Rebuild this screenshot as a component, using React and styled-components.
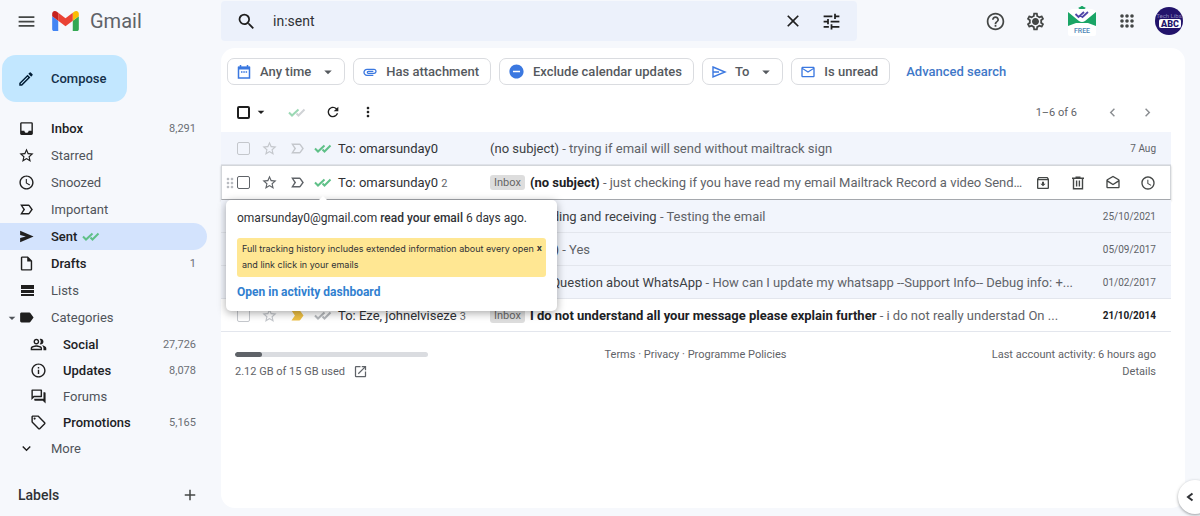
import React from 'react';
import styled, { createGlobalStyle, css } from 'styled-components';
import {
  MdAdd,
  MdArrowDropDown,
  MdAttachment,
  MdChevronLeft,
  MdChevronRight,
  MdClose,
  MdDragIndicator,
  MdExpandMore,
  MdHelpOutline,
  MdInbox,
  MdInfoOutline,
  MdLabel,
  MdLabelImportant,
  MdLabelImportantOutline,
  MdLaunch,
  MdMailOutline,
  MdMenu,
  MdMoreVert,
  MdOutlineArchive,
  MdOutlineDrafts,
  MdOutlineForum,
  MdOutlineInsertDriveFile,
  MdOutlineLocalOffer,
  MdOutlineModeEdit,
  MdOutlinePeopleAlt,
  MdOutlineSettings,
  MdRefresh,
  MdRemoveCircle,
  MdSchedule,
  MdSearch,
  MdStarBorder,
  MdTune,
} from 'react-icons/md';

const GlobalStyle = createGlobalStyle`
  * {
    box-sizing: border-box;
  }
  body {
    margin: 0;
    background: #f6f8fc;
    color: #303236;
    font-family: Roboto, 'Open Sans', sans-serif;
    font-size: 13px;
    overflow-x: hidden;
  }
  button, input {
    font: inherit;
    color: inherit;
  }
  ul {
    list-style: none;
    margin: 0;
    padding: 0;
  }
  a {
    color: inherit;
    text-decoration: none;
  }
  svg {
    display: block;
    flex: none;
  }
`;

const Page = styled.div`
  display: flex;
  flex-direction: column;
  min-height: 100vh;
`;

const Header = styled.header`
  display: flex;
  align-items: center;
  padding: 1px 17px 7px 0;
`;

const Brand = styled.div`
  width: 221px;
  flex: none;
  display: flex;
  align-items: center;
  padding-left: 16px;
`;

const BrandLink = styled.a`
  display: flex;
  align-items: center;
  gap: 11px;
  margin-left: 15px;
  color: #5f6368;
  font-size: 20px;
`;

const IconButton = styled.button`
  display: flex;
  align-items: center;
  justify-content: center;
  padding: 0;
  border: 0;
  background: none;
  color: ${(props) => props.$color || '#444746'};
  cursor: pointer;
`;

const SearchForm = styled.form`
  flex: 0 1 636px;
  display: flex;
  align-items: center;
  height: 40px;
  padding: 0 15px;
  border-radius: 4px;
  background: #ecf1fb;

  input {
    flex: 1;
    min-width: 0;
    margin: 0 16px;
    padding: 0;
    border: 0;
    outline: 0;
    background: none;
    font-size: 14px;
  }
  button + button {
    margin-left: 18px;
  }
`;

const HeaderTools = styled.div`
  display: flex;
  align-items: center;
  margin-left: auto;
  gap: 19px;
`;

const Body = styled.div`
  flex: 1;
  display: flex;
`;

const Sidebar = styled.aside`
  width: 221px;
  flex: none;
  padding-top: 7px;
`;

const ComposeButton = styled.button`
  display: flex;
  align-items: center;
  gap: 16px;
  height: 47px;
  margin: 0 0 13px 2px;
  padding: 0 20px 0 15px;
  border: 0;
  border-radius: 14px;
  background: #c2e7ff;
  color: #14304a;
  font-size: 13px;
  font-weight: 500;

  svg {
    color: #001d35;
  }
`;

const NavItem = styled.a`
  display: flex;
  align-items: center;
  position: relative;
  height: ${(props) => (props.$nested ? 26 : 27)}px;
  margin-right: 14px;
  padding: 0 11px 0 ${(props) => (props.$nested ? '30px' : '18px')};
  border-radius: 0 14px 14px 0;
  font-weight: ${(props) => (props.$bold ? 500 : 400)};
  color: ${(props) => (props.$bold ? '#202124' : '#50545a')};
  background: ${(props) => (props.$active ? '#d3e3fd' : 'none')};

  > svg:first-child {
    margin-right: 16px;
    color: #1f1f1f;
  }
`;

const NavCount = styled.span`
  margin-left: auto;
  font-size: 11px;
  font-weight: 400;
  color: #6b6f75;
`;

const NavTicks = styled.span`
  margin-left: 5px;
`;

const Expander = styled.span`
  position: absolute;
  left: 4px;
`;

const LabelsHead = styled.div`
  display: flex;
  align-items: center;
  justify-content: space-between;
  padding: 24px 22px 0 18px;

  h2 {
    margin: 0;
    font-size: 14px;
    font-weight: 500;
  }
`;

const Panel = styled.main`
  flex: 1;
  min-width: 0;
  margin: 0 15px 8px 0;
  padding: 10px 14px 0 0;
  border-radius: 14px;
  background: #fff;
`;

const Filters = styled.div`
  display: flex;
  align-items: center;
  gap: 8px;
  padding-left: 6px;
`;

const Chip = styled.button`
  display: flex;
  align-items: center;
  height: 27px;
  gap: 8px;
  padding: 0 ${(props) => (props.$menu ? 7 : 11)}px 0 8px;
  border: 1px solid #dadce0;
  border-radius: 7px;
  background: #fff;
  color: #55595e;
  font-size: 13px;
  font-weight: 500;
  white-space: nowrap;

  > svg:first-child {
    color: #3b78e0;
  }
`;

const AdvancedLink = styled.a`
  margin-left: 8px;
  color: #3f78c8;
  font-weight: 500;
`;

const Toolbar = styled.div`
  display: flex;
  align-items: center;
  height: 47px;
  padding: 7px 15px 0 16px;
`;

const Checkbox = styled.input`
  appearance: none;
  width: 13px;
  height: 13px;
  margin: 0;
  flex: none;
  border: ${(props) => (props.$strong ? 2 : 1)}px solid ${(props) => props.$color};
  border-radius: 2px;
`;

const ToolGroup = styled.div`
  display: flex;
  align-items: center;
  gap: 19px;
  margin-left: 3px;
`;

const Pager = styled.div`
  display: flex;
  align-items: center;
  gap: 18px;
  margin-left: auto;
  font-size: 11px;
  color: #5f6368;

  span {
    margin-right: 9px;
  }
`;

const hovered = css`
  height: 35px;
  background: #fff;
  border: 1px solid #d3d6da;
  border-bottom-color: #a5a8ad;
  padding: 0 14px 0 15px;
  box-shadow: 0 1px 2px rgba(60, 64, 67, 0.3);
`;

const MailRow = styled.li`
  position: relative;
  display: flex;
  align-items: center;
  height: 33px;
  padding: 0 15px 0 16px;
  border-bottom: 1px solid #e3e6ed;
  background: ${(props) => (props.$unread ? '#fff' : '#f2f5fc')};
  ${(props) => props.$hovered && hovered}
`;

const Marks = styled.div`
  display: flex;
  align-items: center;
  width: 101px;
  flex: none;
  gap: 11px;
  color: ${(props) => (props.$hovered ? '#5f6368' : '#c4c7cc')};

  svg:last-child {
    margin-left: -3px;
  }
`;

const DragHandle = styled.span`
  position: absolute;
  left: 0;
  color: #b8bbc0;
`;

const Sender = styled.span`
  width: 152px;
  flex: none;
  white-space: nowrap;

  small {
    font-size: 11px;
    color: #5f6368;
  }
`;

const Summary = styled.div`
  flex: 1;
  min-width: 0;
  display: flex;
  align-items: center;
  gap: 5px;
`;

const Tag = styled.span`
  flex: none;
  padding: 0 4px;
  border-radius: 3px;
  background: #ddd;
  color: #666;
  font-size: 11px;
  line-height: 15px;
`;

const Subject = styled.p`
  margin: 0;
  overflow: hidden;
  white-space: nowrap;
  text-overflow: ellipsis;
  color: #5f6368;

  strong {
    font-weight: ${(props) => (props.$bold ? 700 : 400)};
    color: ${(props) => (props.$bold ? '#202124' : '#3c4043')};
  }
`;

const DateCell = styled.time`
  width: 80px;
  flex: none;
  text-align: right;
  font-size: 10px;
  font-weight: ${(props) => (props.$bold ? 700 : 400)};
  color: ${(props) => (props.$bold ? '#202124' : '#5f6368')};
`;

const RowActions = styled.div`
  display: flex;
  flex: none;
  gap: 19px;
  margin-left: 12px;
`;

const Tooltip = styled.div`
  position: absolute;
  z-index: 2;
  top: 34px;
  left: 4px;
  width: 331px;
  padding: 10px 11px 11px;
  border-radius: 5px;
  background: #fff;
  box-shadow: 0 2px 8px rgba(0, 0, 0, 0.35);
  font-size: 12px;
  line-height: 16px;

  &::before {
    content: '';
    position: absolute;
    top: -4px;
    left: 92px;
    border: 5px solid transparent;
    border-top: 0;
    border-bottom-color: #fff;
  }
  p {
    margin: 0;
  }
  b {
    font-weight: 500;
  }
  > a {
    font-weight: 700;
    color: #3180d0;
  }
`;

const Notice = styled.div`
  display: flex;
  justify-content: space-between;
  align-items: flex-start;
  margin: 12px 0 7px;
  padding: 3px 4px 4px 5px;
  border-radius: 3px;
  background: #ffe793;
  font-family: Inter, sans-serif;
  font-size: 9px;

  button {
    padding: 0;
    border: 0;
    background: none;
    font-size: 9px;
    font-weight: 700;
    line-height: 14px;
  }
`;

const Footer = styled.footer`
  display: grid;
  grid-template-columns: 1fr 1fr 1fr;
  padding: 14px 15px 0 14px;
  font-size: 11px;
  line-height: 17px;
  color: #5f6368;
`;

const Storage = styled.div`
  a {
    display: flex;
    align-items: center;
    gap: 8px;
  }
`;

const Meter = styled.div`
  width: 193px;
  height: 5px;
  margin: 6px 0;
  border-radius: 3px;
  background: #dadce0;
  overflow: hidden;

  div {
    height: 100%;
    border-radius: 3px;
    background: #5f6368;
  }
`;

const FooterText = styled.div`
  text-align: ${(props) => props.$align};
`;

const SidePanelToggle = styled.button`
  position: fixed;
  right: -12px;
  bottom: 2px;
  width: 34px;
  height: 34px;
  padding: 0 0 0 8px;
  border: 0;
  border-radius: 50%;
  background: #fff;
  box-shadow: 0 1px 3px rgba(60, 64, 67, 0.5);
`;

const GmailLogo = () => (
  <svg width="27" height="20" viewBox="52 42 88 66">
    <path fill="#4285f4" d="M58 108h14V74L52 59v43c0 3.32 2.69 6 6 6" />
    <path fill="#34a853" d="M120 108h14c3.32 0 6-2.69 6-6V59l-20 15" />
    <path fill="#fbbc04" d="M120 48v26l20-15v-8c0-7.42-8.47-11.65-14.4-7.2" />
    <path fill="#ea4335" d="M72 74V48l24 18 24-18v26L96 92" />
    <path fill="#c5221f" d="M52 51v8l20 15V48l-5.6-4.2c-5.94-4.45-14.4-.22-14.4 7.2" />
  </svg>
);

const Ticks = ({ first = '#5fc088', second = first }) => (
  <svg width="18" height="9" viewBox="0 0 18 9" fill="none" strokeWidth="2">
    <path stroke={second} d="M8.5 5.5l2 2L16.5 1.5" />
    <path stroke={first} d="M1 4.5l3 3L10.5 1.5" />
  </svg>
);

const SentIcon = () => (
  <svg width="17" height="17" viewBox="0 0 24 24" fill="currentColor">
    <path d="M3 20v-6l8-2-8-2V4l19 8z" />
  </svg>
);

const ListsIcon = () => (
  <svg width="17" height="17" viewBox="0 0 17 17" fill="currentColor">
    <path d="M3 3h13v4H3zM3 8h13v3H3zM3 12h13v2H3z" />
  </svg>
);

const CalendarIcon = () => (
  <svg width="16" height="16" viewBox="0 0 16 16" fill="none" stroke="currentColor">
    <path strokeWidth="1.5" d="M2.5 3.5h11v10.5h-11z" />
    <path strokeWidth="3" d="M2 4h12" />
    <path strokeWidth="1.5" d="M4.5 1v3M11.5 1v3" />
    <path strokeWidth="1.5" d="M5 8h1.5M7.3 8h1.5M9.6 8h1.5" />
  </svg>
);

const SendOutlineIcon = () => (
  <svg width="16" height="16" viewBox="0 0 16 16" fill="none" stroke="currentColor" strokeWidth="1.4">
    <path d="M2 3l12 5-12 5V3zM2 8h6" />
  </svg>
);

const TrashIcon = () => (
  <svg width="16" height="16" viewBox="0 0 16 16" fill="none" stroke="currentColor" strokeWidth="1.4">
    <path d="M3.5 3.5v10.3h9V3.5M2 3.2h12M5.5 2.2h5M6.6 5.5v6M9.4 5.5v6" />
  </svg>
);

const SettingsIcon = () => (
  <svg width="21" height="21" viewBox="0 0 24 24">
    <MdOutlineSettings size={24} />
    <circle cx="12" cy="12" r="3" fill="currentColor" />
  </svg>
);

const AppsIcon = () => (
  <svg width="18" height="18" viewBox="0 0 18 18" fill="currentColor">
    {[4, 9, 14].map((y) => [4, 9, 14].map((x) => <circle key={`${x}-${y}`} cx={x} cy={y} r="1.8" />))}
  </svg>
);

const CollapseIcon = () => (
  <svg width="8" height="10" viewBox="0 0 8 10" fill="none" stroke="currentColor" strokeWidth="2">
    <path d="M6.5 1.5L2 5l4.5 3.5" />
  </svg>
);

const MailtrackLogo = () => (
  <svg width="34" height="30" viewBox="-2 0 34 30">
    <path fill="#1aa566" d="M10 4l5-4 5 4z" />
    <path fill="#fff" d="M1 5l4-2h20l4 2v23a2 2 0 0 1-2 2H3a2 2 0 0 1-2-2z" />
    <path fill="#1aa566" d="M11 2l4-2 4 2zM1 6l11 9q3 2 6 0l11-9v14l-8-3H9l-8 3z" />
    <path fill="none" stroke="#5046a8" strokeWidth="1.8" d="M8.5 8l3 3L17 6M13.5 9.5l2 1.5L21 6" />
    <text x="15" y="27" textAnchor="middle" fontSize="7" fontWeight="500" fill="#4c86b8">
      FREE
    </text>
  </svg>
);

const Avatar = () => (
  <svg width="28" height="28" viewBox="0 0 28 28">
    <circle cx="14" cy="14" r="14" fill="#22136b" />
    <text x="14" y="11" textAnchor="middle" fontSize="6" fill="#8d86bd">
      Tech Libs
    </text>
    <rect x="4" y="12" width="22" height="9" rx="2" fill="#fff" />
    <text x="15" y="20" textAnchor="middle" fontSize="9" fontWeight="900" fill="#22136b">
      ABC
    </text>
  </svg>
);

const navItems = [
  { label: 'Inbox', icon: <MdInbox size={17} />, count: '8,291', bold: true },
  { label: 'Starred', icon: <MdStarBorder size={17} /> },
  { label: 'Snoozed', icon: <MdSchedule size={17} /> },
  { label: 'Important', icon: <MdLabelImportantOutline size={17} /> },
  { label: 'Sent', icon: <SentIcon />, bold: true, active: true },
  { label: 'Drafts', icon: <MdOutlineInsertDriveFile size={17} />, count: '1', bold: true },
  { label: 'Lists', icon: <ListsIcon /> },
  { label: 'Categories', icon: <MdLabel size={17} />, expander: true },
  { label: 'Social', icon: <MdOutlinePeopleAlt size={17} />, count: '27,726', bold: true, nested: true },
  { label: 'Updates', icon: <MdInfoOutline size={17} />, count: '8,078', bold: true, nested: true },
  { label: 'Forums', icon: <MdOutlineForum size={17} />, nested: true },
  { label: 'Promotions', icon: <MdOutlineLocalOffer size={17} />, count: '5,165', bold: true, nested: true },
  { label: 'More', icon: <MdExpandMore size={17} /> },
];

const mails = [
  { to: 'omarsunday0', subject: '(no subject)', text: 'trying if email will send without mailtrack sign', date: '7 Aug' },
  {
    to: 'omarsunday0',
    count: 2,
    tag: true,
    subject: '(no subject)',
    text: 'just checking if you have read my email Mailtrack Record a video Send...',
    unread: true,
    hovered: true,
  },
  { to: 'omarsunday0', tag: true, subject: 'Sending and receiving', text: 'Testing the email', date: '25/10/2021' },
  { to: 'omarsunday0', subject: '(no subject)', text: 'Yes', date: '05/09/2017' },
  {
    to: 'support',
    tag: true,
    subject: 'Re: Question about WhatsApp',
    text: 'How can I update my whatsapp --Support Info-- Debug info: +...',
    date: '01/02/2017',
  },
  {
    to: 'Eze, johnelviseze',
    count: 3,
    tag: true,
    subject: 'I do not understand all your message please explain further',
    text: 'i do not really understad On ...',
    date: '21/10/2014',
    unread: true,
    important: true,
  },
];

const ReadTooltip = () => (
  <Tooltip role="tooltip">
    <p>
      omarsunday0@gmail.com <b>read your email</b> 6 days ago.
    </p>
    <Notice>
      <p>
        Full tracking history includes extended information about every open
        <br />
        and link click in your emails
      </p>
      <button aria-label="Dismiss">x</button>
    </Notice>
    <a href="#dashboard">Open in activity dashboard</a>
  </Tooltip>
);

const Mail = ({ mail }) => (
  <MailRow $unread={mail.unread} $hovered={mail.hovered}>
    {mail.hovered && (
      <DragHandle>
        <MdDragIndicator size={16} />
      </DragHandle>
    )}
    <Marks $hovered={mail.hovered}>
      <Checkbox type="checkbox" aria-label="Select" $color={mail.hovered ? '#5f6368' : '#c4c7cc'} />
      <MdStarBorder size={17} />
      {mail.important ? (
        <MdLabelImportant size={17} color="#eec044" />
      ) : (
        <MdLabelImportantOutline size={17} />
      )}
      <Ticks first={mail.important ? '#b5b8bc' : undefined} />
    </Marks>
    <Sender>
      To: {mail.to} {mail.count && <small>{mail.count}</small>}
    </Sender>
    <Summary>
      {mail.tag && <Tag>Inbox</Tag>}
      <Subject $bold={mail.unread}>
        <strong>{mail.subject}</strong> - {mail.text}
      </Subject>
    </Summary>
    {mail.hovered ? (
      <RowActions>
        <IconButton aria-label="Archive"><MdOutlineArchive size={16} /></IconButton>
        <IconButton aria-label="Delete"><TrashIcon /></IconButton>
        <IconButton aria-label="Mark as unread"><MdOutlineDrafts size={16} /></IconButton>
        <IconButton aria-label="Snooze"><MdSchedule size={16} /></IconButton>
      </RowActions>
    ) : (
      <DateCell $bold={mail.unread}>{mail.date}</DateCell>
    )}
    {mail.hovered && <ReadTooltip />}
  </MailRow>
);

const App = () => {
  return (
    <Page>
      <GlobalStyle />
      <Header>
        <Brand>
          <IconButton aria-label="Main menu"><MdMenu size={21} /></IconButton>
          <BrandLink href="#inbox">
            <GmailLogo />
            Gmail
          </BrandLink>
        </Brand>
        <SearchForm role="search">
          <IconButton type="button" aria-label="Search" $color="#1f1f1f"><MdSearch size={21} /></IconButton>
          <input aria-label="Search mail" defaultValue="in:sent" />
          <IconButton type="button" aria-label="Clear search" $color="#1f1f1f"><MdClose size={20} /></IconButton>
          <IconButton type="button" aria-label="Search options" $color="#1f1f1f"><MdTune size={21} /></IconButton>
        </SearchForm>
        <HeaderTools>
          <IconButton aria-label="Support"><MdHelpOutline size={21} /></IconButton>
          <IconButton aria-label="Settings"><SettingsIcon /></IconButton>
          <IconButton aria-label="Mailtrack"><MailtrackLogo /></IconButton>
          <IconButton aria-label="Google apps"><AppsIcon /></IconButton>
          <IconButton aria-label="Account"><Avatar /></IconButton>
        </HeaderTools>
      </Header>
      <Body>
        <Sidebar>
          <ComposeButton>
            <MdOutlineModeEdit size={18} />
            Compose
          </ComposeButton>
          <nav>
            {navItems.map((item) => (
              <NavItem
                key={item.label}
                href={`#${item.label.toLowerCase()}`}
                $bold={item.bold}
                $active={item.active}
                $nested={item.nested}
              >
                {item.icon}
                {item.expander && (
                  <Expander><MdArrowDropDown size={16} /></Expander>
                )}
                {item.label}
                {item.active && <NavTicks><Ticks /></NavTicks>}
                {item.count && <NavCount>{item.count}</NavCount>}
              </NavItem>
            ))}
          </nav>
          <LabelsHead>
            <h2>Labels</h2>
            <IconButton aria-label="Create new label"><MdAdd size={18} /></IconButton>
          </LabelsHead>
        </Sidebar>
        <Panel>
          <Filters>
            <Chip $menu><CalendarIcon />Any time<MdArrowDropDown size={18} /></Chip>
            <Chip><MdAttachment size={16} />Has attachment</Chip>
            <Chip><MdRemoveCircle size={17} />Exclude calendar updates</Chip>
            <Chip $menu><SendOutlineIcon />To<MdArrowDropDown size={18} /></Chip>
            <Chip><MdMailOutline size={16} />Is unread</Chip>
            <AdvancedLink href="#advanced">Advanced search</AdvancedLink>
          </Filters>
          <Toolbar>
            <Checkbox type="checkbox" aria-label="Select all" $color="#1f1f1f" $strong />
            <ToolGroup>
              <IconButton aria-label="Select options" $color="#1f1f1f"><MdArrowDropDown size={16} /></IconButton>
              <IconButton aria-label="Tracking"><Ticks first="#9bd8b4" second="#d0d3d6" /></IconButton>
              <IconButton aria-label="Refresh" $color="#1f1f1f"><MdRefresh size={16} /></IconButton>
              <IconButton aria-label="More" $color="#1f1f1f"><MdMoreVert size={16} /></IconButton>
            </ToolGroup>
            <Pager>
              <span>1–6 of 6</span>
              <IconButton aria-label="Newer" $color="#8a8d91"><MdChevronLeft size={17} /></IconButton>
              <IconButton aria-label="Older" $color="#8a8d91"><MdChevronRight size={17} /></IconButton>
            </Pager>
          </Toolbar>
          <ul>
            {mails.map((mail, index) => (
              <Mail key={index} mail={mail} />
            ))}
          </ul>
          <Footer>
            <Storage>
              <Meter><div style={{ width: `${(2.12 / 15) * 100}%` }} /></Meter>
              <a href="#storage">2.12 GB of 15 GB used <MdLaunch size={15} /></a>
            </Storage>
            <FooterText $align="center">
              <a href="#terms">Terms</a> · <a href="#privacy">Privacy</a> · <a href="#policies">Programme Policies</a>
            </FooterText>
            <FooterText $align="right">
              Last account activity: 6 hours ago
              <br />
              <a href="#details">Details</a>
            </FooterText>
          </Footer>
        </Panel>
      </Body>
      <SidePanelToggle aria-label="Show side panel">
        <CollapseIcon />
      </SidePanelToggle>
    </Page>
  );
};

export default App;
